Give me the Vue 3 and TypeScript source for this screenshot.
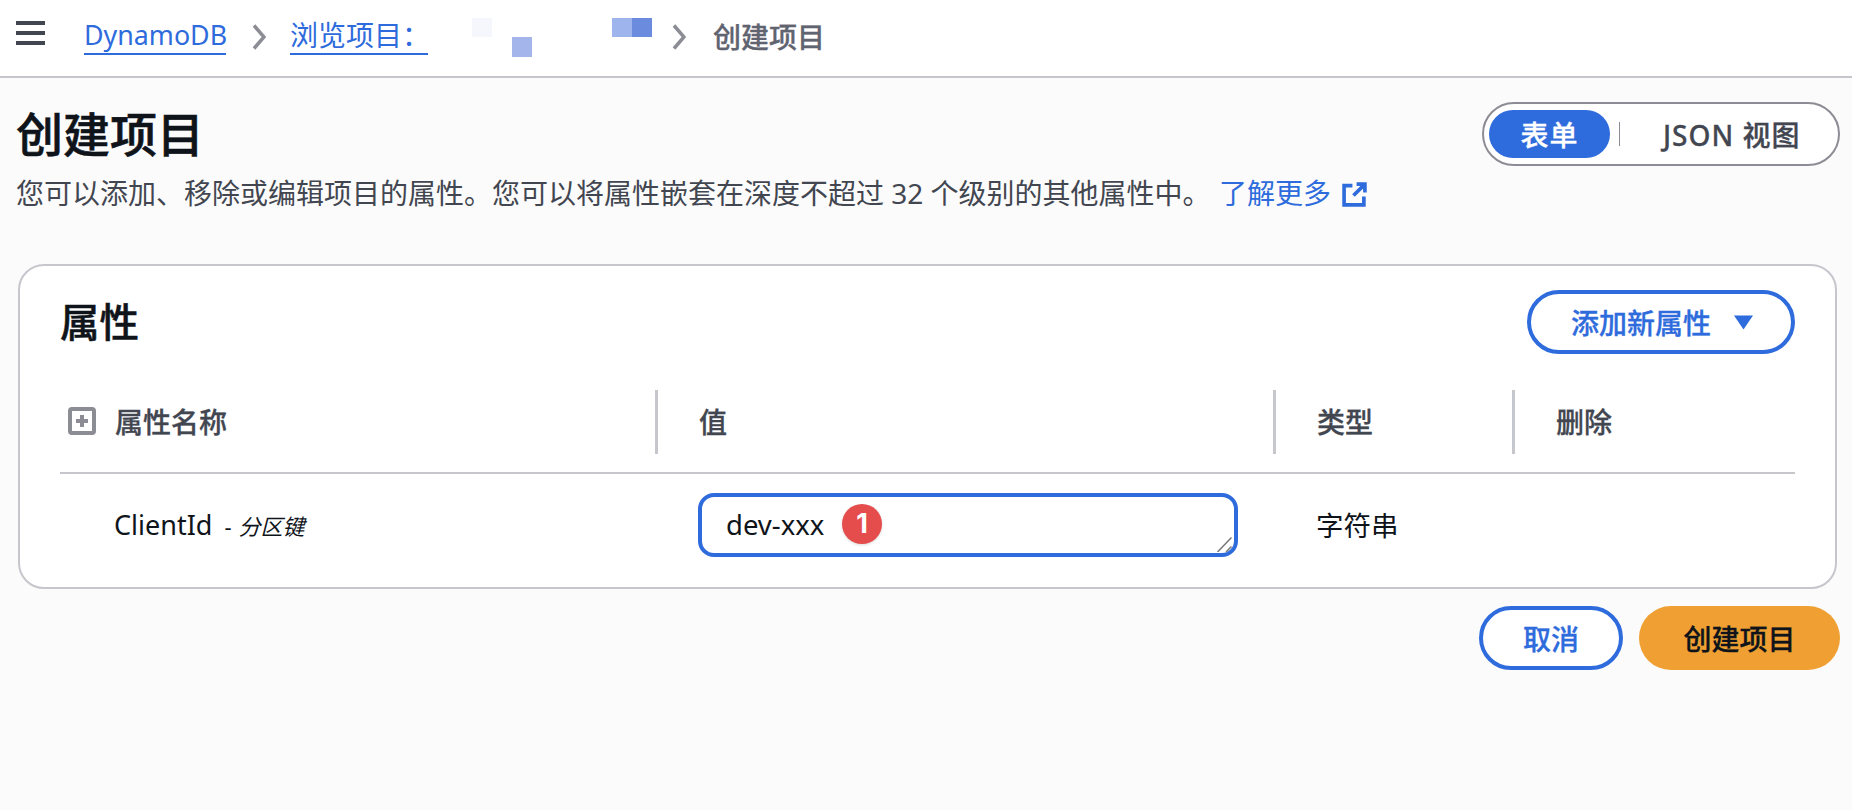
<template>
  <div class="page">
    <header class="topbar">
      <button class="menu-btn" aria-label="菜单">
        <span></span><span></span><span></span>
      </button>
      <nav class="crumbs">
        <a class="crumb-link crumb-home">DynamoDB</a>
        <svg class="crumb-sep" viewBox="0 0 14 26"><path d="M2 1.500 12 13 2 24.500" /></svg>
        <a class="crumb-link crumb-table">浏览项目：</a>
        <svg class="mosaic" viewBox="0 0 180 40" width="180" height="40">
          <rect x="0" y="0" width="20" height="19" fill="#f6f7fd" />
          <rect x="40" y="19" width="20" height="20" fill="#a3b5ea" />
          <rect x="140" y="0" width="20" height="19" fill="#9db4ec" />
          <rect x="160" y="0" width="20" height="19" fill="#6b8bdf" />
        </svg>
        <svg class="crumb-sep" viewBox="0 0 14 26"><path d="M2 1.500 12 13 2 24.500" /></svg>
        <span class="crumb-current">创建项目</span>
      </nav>
    </header>

    <main class="content">
      <div class="head-row">
        <div>
          <h1>创建项目</h1>
          <p class="desc">
            您可以添加、移除或编辑项目的属性。您可以将属性嵌套在深度不超过 32 个级别的其他属性中。
            <a class="learn">了解更多
              <svg class="ext-icon" viewBox="0 0 24 24">
                <path d="M10 3.500H2V22H21V14" />
                <path d="M11 13 21.500 2.500M14 2H22V10" />
              </svg>
            </a>
          </p>
        </div>
        <div class="view-toggle">
          <button class="toggle-item active">表单</button>
          <i class="toggle-line"></i>
          <button class="toggle-item">JSON 视图</button>
        </div>
      </div>

      <section class="card">
        <div class="card-head">
          <h2>属性</h2>
          <button class="btn btn-line add-btn">
            添加新属性
            <svg class="caret" viewBox="0 0 21 16"><path d="M1 1H20L10.500 15Z" /></svg>
          </button>
        </div>

        <div class="attr-grid attr-header">
          <div class="th first">
            <svg class="plus-box" viewBox="0 0 28 28">
              <rect x="2" y="2" width="24" height="24" rx="2" />
              <path d="M14 8V20M8 14H20" />
            </svg>
            属性名称
          </div>
          <div class="th">值</div>
          <div class="th">类型</div>
          <div class="th last">删除</div>
        </div>

        <div class="attr-grid attr-row">
          <div class="td name">ClientId<span class="key-note"><span class="dash">-</span><em>分区键</em></span></div>
          <div class="td value">
            <div class="value-box">
              <textarea v-model="clientId" spellcheck="false"></textarea>
              <span class="badge">1</span>
              <svg class="grip" viewBox="0 0 15 15"><path d="M0.500 15 14.500 0.500M9 15 14.500 9.500" /></svg>
            </div>
          </div>
          <div class="td type">字符串</div>
          <div class="td"></div>
        </div>
      </section>

      <div class="actions">
        <button class="btn btn-line cancel">取消</button>
        <button class="btn btn-primary">创建项目</button>
      </div>
    </main>
  </div>
</template>

<script setup lang="ts">
import { ref } from 'vue'

const clientId = ref<string>('dev-xxx')
</script>

<style>
html, body {
  margin: 0;
  background: #fbfbfb;
}
</style>

<style scoped>
.page {
  height: 810px;
  overflow: hidden;
  background: #fbfbfb;
  color: #0f141a;
  font-family: "Noto Sans", "Noto Sans CJK SC", sans-serif;
  font-size: 28px;
}
.topbar {
  height: 76px;
  display: flex;
  align-items: center;
  background: #fff;
  border-bottom: 2px solid #c6c6cd;
  padding-left: 16px;
}
.menu-btn {
  width: 29px;
  height: 24px;
  padding: 0;
  border: 0;
  background: none;
  display: flex;
  flex-direction: column;
  justify-content: space-between;
  margin-top: -10px;
}
.menu-btn span {
  height: 4px;
  background: #424650;
}
.crumbs {
  display: flex;
  align-items: center;
  margin-left: 39px;
  line-height: 32px;
}
.crumb-link {
  color: #2e6bdc;
  border-bottom: 2px solid #2e6bdc;
  padding-bottom: 2px;
  margin-bottom: 2px;
}
.crumb-home {
  width: 142px;
  font-size: 26.800px;
  white-space: nowrap;
}
.crumb-sep {
  width: 14px;
  height: 26px;
  fill: none;
  stroke: #8c8c94;
  stroke-width: 3.500;
  margin: 0 24px 2px 26px;
}
.crumb-table {
  width: 138px;
  white-space: nowrap;
}
.mosaic {
  margin-left: 44px;
  margin-right: -6px;
}
.crumb-current {
  color: #5f6470;
  font-weight: 500;
  -webkit-text-stroke: 0.300px #5f6470;
  margin-left: 3px;
  padding-bottom: 3px;
}
.content {
  padding: 0 12px 0 16px;
}
.head-row {
  display: flex;
  justify-content: space-between;
  align-items: flex-start;
  padding-top: 24px;
}
h1 {
  margin: 0;
  font-size: 47px;
  line-height: 64px;
  font-weight: 500;
  -webkit-text-stroke: 0.600px #0f141a;
}
.desc {
  margin: 9px 0 0;
  color: #424650;
  font-size: 28px;
  line-height: 36px;
  white-space: nowrap;
}
.learn {
  color: #2e6bdc;
  margin-left: 1px;
}
.ext-icon {
  width: 25px;
  height: 25px;
  margin-left: 4px;
  vertical-align: -3px;
  fill: none;
  stroke: #2e6bdc;
  stroke-width: 3.500;
}
.view-toggle {
  width: 358px;
  height: 64px;
  box-sizing: border-box;
  border: 2px solid #8c8c94;
  border-radius: 32px;
  background: #fff;
  display: flex;
  align-items: center;
  padding-left: 5px;
}
.toggle-item {
  border: 0;
  background: none;
  font: inherit;
  font-weight: 500;
  font-size: 28px;
  letter-spacing: 1px;
  -webkit-text-stroke: 0.300px currentColor;
  color: #424650;
  height: 48px;
  padding: 0;
  white-space: nowrap;
}
.toggle-item.active {
  width: 121px;
  border-radius: 24px;
  background: #2e6bdc;
  color: #fff;
}
.toggle-line {
  width: 1px;
  height: 24px;
  margin: 0 43px 0 9px;
  background: #8c8c94;
}
.card {
  width: 1819px;
  box-sizing: border-box;
  margin: 53px 0 0 2px;
  background: #fff;
  border: 2px solid #c6c6cd;
  border-radius: 26px;
  padding: 24px 40px 0 40px;
  height: 325px;
}
.card-head {
  display: flex;
  justify-content: space-between;
  align-items: center;
  height: 64px;
}
h2 {
  margin: 0;
  font-size: 39.500px;
  font-weight: 500;
  -webkit-text-stroke: 0.500px #0f141a;
  line-height: 48px;
}
.btn {
  font: inherit;
  font-weight: 500;
  -webkit-text-stroke: 0.300px currentColor;
  height: 64px;
  border-radius: 32px;
  box-sizing: border-box;
  padding: 0;
  white-space: nowrap;
}
.btn-line {
  background: #fff;
  border: 4px solid #2e6bdc;
  color: #2e6bdc;
}
.add-btn {
  width: 268px;
  display: flex;
  align-items: center;
  padding-left: 40px;
}
.caret {
  width: 21px;
  height: 17px;
  margin-left: 22px;
  fill: #2e6bdc;
}
.attr-grid {
  display: grid;
  grid-template-columns: 598px 618px 239px 1fr;
}
.attr-header {
  margin-top: 36px;
  height: 64px;
}
.th {
  border-right: 3px solid #c6c6cd;
  display: flex;
  align-items: center;
  padding: 0 0 2px 41px;
  box-sizing: border-box;
  color: #424650;
  font-weight: 500;
  -webkit-text-stroke: 0.300px #424650;
}
.th.first {
  padding-left: 8px;
}
.th.last {
  border-right: 0;
}
.plus-box {
  width: 28px;
  height: 28px;
  margin-right: 19px;
  fill: none;
  stroke: #8c8c94;
  stroke-width: 4;
}
.attr-row {
  margin-top: 18px;
  border-top: 2px solid #c6c6cd;
  height: 112px;
  padding-bottom: 8px;
  box-sizing: border-box;
  align-items: center;
}
.td.name {
  padding-left: 54px;
  font-size: 27px;
  padding-bottom: 1px;
}
.key-note {
  margin-left: 12px;
}
.dash {
  font-size: 22px;
}
.key-note em {
  font-size: 22px;
  margin-left: 7px;
}
.td.value {
  padding-left: 40px;
}
.td.type {
  padding: 0 0 3px 40px;
  font-size: 27.500px;
}
.value-box {
  position: relative;
  width: 540px;
  height: 64px;
}
textarea {
  display: block;
  width: 100%;
  height: 100%;
  box-sizing: border-box;
  border: 4px solid #2e6bdc;
  border-radius: 16px;
  padding: 8px 24px 0;
  outline: none;
  resize: none;
  font: inherit;
  font-size: 27.500px;
  color: #0f141a;
  background: #fff;
  line-height: 40px;
}
.badge {
  position: absolute;
  left: 144px;
  top: 11px;
  width: 40px;
  height: 40px;
  border-radius: 50%;
  background: #e54d4d;
  color: #fff;
  font-family: Inter, "Liberation Sans", sans-serif;
  font-size: 27px;
  font-weight: 700;
  line-height: 40px;
  text-align: center;
  box-shadow: 0 1px 3px rgba(0, 0, 0, 0.15);
}
.grip {
  position: absolute;
  right: 6px;
  bottom: 5px;
  width: 15px;
  height: 15px;
  fill: none;
  stroke: #767676;
  stroke-width: 1.500;
}
.actions {
  display: flex;
  justify-content: flex-end;
  gap: 16px;
  margin-top: 17px;
}
.cancel {
  width: 144px;
}
.btn-primary {
  width: 201px;
  border: 0;
  background: #f0a032;
  color: #0f141a;
}
</style>
